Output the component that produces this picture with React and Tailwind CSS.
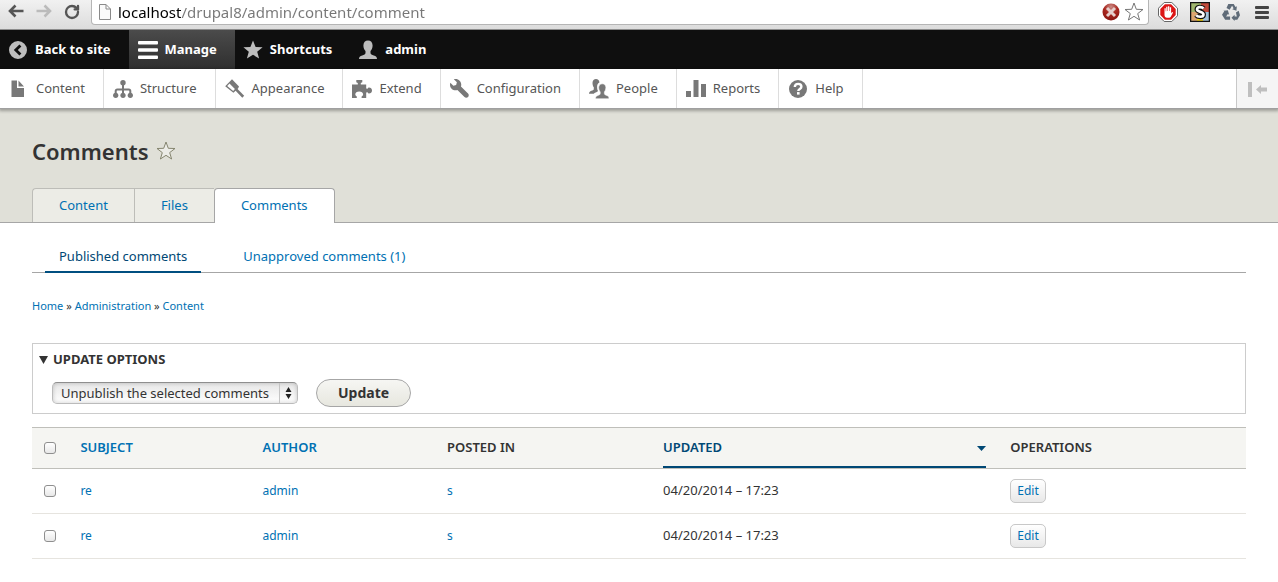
import { RotateCw } from 'lucide-react';

const svgProps = { viewBox: '0 0 20 20', width: 20, height: 20, fill: 'currentColor', 'aria-hidden': true };

const icons = {
  back: (
    <svg {...svgProps}>
      <path fillRule="evenodd" d="M10 1a9 9 0 1 0 0 18 9 9 0 0 0 0-18zM11.4 4.4l2 2L9.8 10l3.6 3.6-2 2L5.8 10z" />
    </svg>
  ),
  manage: (
    <svg {...svgProps}>
      <rect y="1" width="20" height="3.500" rx="1" />
      <rect y="8.250" width="20" height="3.500" rx="1" />
      <rect y="15.500" width="20" height="3.500" rx="1" />
    </svg>
  ),
  star: (
    <svg {...svgProps}>
      <path d="M10 .5l2.600 6.400 7 .4-5.400 4.400 1.900 6.800L10 14.800l-6.100 3.700 1.900-6.800L.4 7.300l7-.4z" />
    </svg>
  ),
  person: (
    <svg {...svgProps}>
      <path d="M10 .5c2.800 0 4.600 1.900 4.600 5 0 2.300-.9 4.300-2.100 5.500v2c0 1.300 1.400 1.800 3.300 2.400 2.200.7 3.200 1.500 3.200 3.600H1c0-2.100 1-2.900 3.200-3.600 1.900-.6 3.300-1.100 3.300-2.400v-2C6.300 9.800 5.400 7.800 5.400 5.500c0-3.100 1.800-5 4.600-5z" />
    </svg>
  ),
  content: (
    <svg {...svgProps}>
      <path d="M2.500 1.500H8v7.500h7v9H2.500zM9.500 1.500l5.500 6H9.500z" />
    </svg>
  ),
  structure: (
    <svg {...svgProps}>
      <circle cx="10" cy="3.800" r="2.700" />
      <path d="M2.700 15v-3a1.500 1.500 0 0 1 1.500-1.500h11.600a1.500 1.500 0 0 1 1.500 1.500v3M10 4v11" fill="none" stroke="currentColor" strokeWidth="2" />
      <circle cx="2.700" cy="16.300" r="2.600" />
      <circle cx="10" cy="16.300" r="2.600" />
      <circle cx="17.300" cy="16.300" r="2.600" />
    </svg>
  ),
  appearance: (
    <svg {...svgProps}>
      <path fillRule="evenodd" d="M7 .3l7 7.200-.8 1.700-4.800 4.600L.2 7.200zM4.500 4.400L2.200 7l6 5 1.700-1.900z" />
      <path d="M11.800 9.200l7.400 7.600-1.900 2-7.400-7.700z" />
    </svg>
  ),
  extend: (
    <svg {...svgProps}>
      <path d="M4.300 1h6v2.200L8.800 4v1.600h5.400v4l1.300.2 1-1.300c2-.2 3.500 1.100 3.500 3s-1.500 3.200-3.500 3l-1-1.300-1.300.2V19H9.600v-1.500c1-.6 1.500-1.300 1.500-2.200 0-1.700-1.600-2.900-3.900-2.900s-3.900 1.200-3.900 2.900c0 .9.500 1.600 1.500 2.200V19H0V5.600h5.800V4l-1.500-.8z" />
    </svg>
  ),
  configuration: (
    <svg {...svgProps} viewBox="0 0 16 16">
      <path d="M14.416 11.586l-5.666-5.665c.15-.449.252-.921.252-1.421 0-2.485-2.016-4.500-4.502-4.500-.505 0-.981.102-1.434.255l2.431 2.431-.588 2.196-2.196.588-2.445-2.445c-.162.464-.268.956-.268 1.475 0 2.486 2.014 4.500 4.500 4.500.500 0 .972-.102 1.421-.251l5.667 5.665c.781.781 2.047.781 2.828 0s.781-2.047 0-2.828z" />
    </svg>
  ),
  people: (
    <svg {...svgProps}>
      <path d="M7 0c2 0 3.400 1.300 3.400 3.400-1.700.9-2.300 2.500-2.300 4.600 0 1.500.2 2.900.9 4-.4.700-1.400 1-2.400 1.500-.8.300-1.400.8-1.800 1.300H0c0-1.700.8-2.500 2.400-3.100 1.500-.5 2.400-.8 2.400-1.800V8.300C3.900 7.300 3.500 5.600 3.500 3.800 3.500 1.500 5 0 7 0z" />
      <path d="M13.300 4.800c2.200 0 3.600 1.500 3.600 3.800 0 1.800-.6 3.300-1.500 4.300v1.700c0 1 1 1.400 2.400 1.900 1.600.6 2.200 1.200 2.200 3.300H6.500c0-2.100.7-2.700 2.300-3.300 1.400-.5 2.400-.9 2.400-1.900v-1.700c-.9-1-1.500-2.500-1.500-4.300 0-2.300 1.400-3.800 3.600-3.800z" stroke="#fff" strokeWidth="0.600" />
    </svg>
  ),
  reports: (
    <svg {...svgProps}>
      <rect x="0" y="12" width="5" height="6" />
      <rect x="7.500" y="1" width="5" height="17" />
      <rect x="15" y="5" width="5" height="13" />
    </svg>
  ),
  help: (
    <svg {...svgProps}>
      <circle cx="10" cy="10" r="9" />
      <path d="M6.800 8c0-2 1.300-3.100 3.300-3.100s3.300 1.100 3.300 2.800c0 2.200-3.100 2.300-3.100 4.300" fill="none" stroke="#fff" strokeWidth="2.400" />
      <rect x="9" y="13.100" width="2.600" height="2.500" fill="#fff" />
    </svg>
  ),
};

const toolbarTabs = [
  { label: 'Back to site', icon: 'back' },
  { label: 'Manage', icon: 'manage', active: true },
  { label: 'Shortcuts', icon: 'star' },
  { label: 'admin', icon: 'person' },
];

const trayItems = [
  { label: 'Content', icon: 'content' },
  { label: 'Structure', icon: 'structure' },
  { label: 'Appearance', icon: 'appearance' },
  { label: 'Extend', icon: 'extend' },
  { label: 'Configuration', icon: 'configuration' },
  { label: 'People', icon: 'people' },
  { label: 'Reports', icon: 'reports' },
  { label: 'Help', icon: 'help' },
];

const comments = [
  { id: 1, subject: 're', author: 'admin', postedIn: 's', updated: '04/20/2014 – 17:23' },
  { id: 2, subject: 're', author: 'admin', postedIn: 's', updated: '04/20/2014 – 17:23' },
];

function StarOutline({ className }) {
  return (
    <svg viewBox="0 0 20 20" width="20" height="20" fill="#fff" fillOpacity="0.4" stroke="currentColor" className={className} aria-hidden="true">
      <path d="M10 1l2.300 6.300 6.700.2-5.300 4.100 1.900 6.400L10 14.300 4.400 18l1.900-6.400L1 7.500l6.700-.2z" />
    </svg>
  );
}

function ArrowIcon({ className }) {
  return (
    <svg viewBox="0 0 16 14" width="16" height="14" fill="none" stroke="currentColor" strokeWidth="2.600" className={className} aria-hidden="true">
      <path d="M7.500 1.500L2 7l5.500 5.500M2 7h13.500" />
    </svg>
  );
}

function BrowserBar() {
  return (
    <div className="flex h-[30px] items-start border-b border-[#8c8c8c] bg-linear-to-b from-[#f1f1f1] to-[#dcdcdc] pl-2">
      <button aria-label="Back" className="mt-1 w-7 text-[#555]"><ArrowIcon /></button>
      <button aria-label="Forward" className="mt-1 w-7 text-[#bbb]"><ArrowIcon className="rotate-180" /></button>
      <button aria-label="Reload" className="mt-1 w-[27px] text-[#555]"><RotateCw className="size-4" strokeWidth={3.5} /></button>
      <div className="flex h-[25px] flex-1 items-center rounded-b border border-t-0 border-[#b5b5b5] bg-white pr-1 pl-[7px]">
        <svg viewBox="0 0 12 16" width="12" height="16" fill="#fafafa" stroke="#8a8a8a" aria-hidden="true">
          <path d="M.5.5h6.500l4.500 4.500v10.500H.5zM7 .5V5h4.500" />
        </svg>
        <input
          aria-label="Address"
          defaultValue="localhost/drupal8/admin/content/comment"
          className="ml-[7px] h-6 min-w-0 flex-1 bg-[linear-gradient(to_right,#000_63px,#777_63px)] bg-clip-text font-['Noto_Sans',sans-serif] text-[15px] text-transparent outline-none"
        />
        <svg viewBox="0 0 18 18" width="18" height="18" aria-hidden="true">
          <defs>
            <radialGradient id="blocked" cx="0.500" cy="0.200" r="0.800">
              <stop offset="0" stopColor="#c98a84" />
              <stop offset="0.500" stopColor="#a8271f" />
              <stop offset="1" stopColor="#8a1510" />
            </radialGradient>
          </defs>
          <circle cx="9" cy="9" r="8.500" fill="url(#blocked)" />
          <path d="M5 5l8 8M13 5l-8 8" stroke="#e6cfcc" strokeWidth="3" />
        </svg>
        <StarOutline className="ml-1 text-[#777]" />
      </div>
      <div className="flex items-center gap-3 pt-[2px] pr-[9px] pl-[9px]">
        <svg viewBox="0 0 20 20" width="20" height="20" aria-hidden="true">
          <path d="M6.200.5h7.600l5.700 5.700v7.600l-5.700 5.700H6.200L.5 13.800V6.200z" fill="#fff" stroke="#666" />
          <path d="M6.900 2.300h6.200l4.600 4.600v6.200l-4.600 4.600H6.900l-4.600-4.600V6.900z" fill="#dc1616" />
          <path d="M6.500 9.800V6.300h1.200v3h.5V4.800h1.300v4.300h.5V4.300h1.300v4.800h.5V5.300h1.300v6l1-1.300 1 .6-2.300 4.200c-.4.600-.9.900-1.500.9H9c-1.500 0-2.500-1.200-2.500-2.800z" fill="#fff" />
        </svg>
        <svg viewBox="0 0 20 20" width="20" height="20" aria-hidden="true">
          <rect x="1" y="1" width="18" height="18" fill="#9fb56c" />
          <path d="M11 1h8v9h-8z" fill="#c24a3a" />
          <path d="M1 10h10v9H1z" fill="#dba66f" />
          <path d="M11 10h8v9h-8z" fill="#a3c3da" />
          <path d="M7 15h6v4H7z" fill="#f3d21b" />
          <rect x="0.500" y="0.500" width="19" height="19" fill="none" stroke="#111" strokeWidth="1.500" />
          <path d="M13.500 6.500C12.500 5 7 4.200 7 7.200c0 3 6.500 2 6.500 5.300 0 3.200-5.800 2.700-7.300.8" fill="none" stroke="#111" strokeWidth="5" />
          <path d="M13.500 6.500C12.500 5 7 4.200 7 7.200c0 3 6.500 2 6.500 5.300 0 3.200-5.800 2.700-7.300.8" fill="none" stroke="#fff" strokeWidth="2.600" />
        </svg>
        <svg viewBox="0 0 20 20" width="18" height="20" fill="#5f6b78" aria-hidden="true">
          <path d="M7 1h6l2 3.500 1.500-.8-.5 5-4.600-1.800 1.500-1L11.200 3 8.500 7.500 5 5.500zM1.500 8.500l5-.5 1.500 5-1.500-.8L4.500 15H9v3.500H3.500L0 13l2.500-3.800zM15.500 10.500l3-1.800L20 13.500 17 18.500h-3V20l-3.500-3.500L14 13v2h2.500z" />
        </svg>
        <button aria-label="Browser menu" className="ml-[3px] text-[#444]">
          <svg viewBox="0 0 14 14" width="14" height="14" fill="currentColor" aria-hidden="true">
            <rect y="1" width="14" height="3" rx="1" />
            <rect y="6" width="14" height="3" rx="1" />
            <rect y="11" width="14" height="3" rx="1" />
          </svg>
        </button>
      </div>
    </div>
  );
}

function Toolbar() {
  return (
    <header>
      <nav className="flex h-[39px] bg-[#0f0f0f] text-[13px] font-bold text-white">
        {toolbarTabs.map((tab) => (
          <a
            key={tab.label}
            href="#"
            className={
              tab.active
                ? 'flex items-center gap-[7px] bg-linear-to-b from-[#4b4b4b] to-[#2f2f2f] pr-[18px] pl-[9px]'
                : 'flex items-center gap-[7px] pr-[18px] pl-2 [&_svg]:text-[#bdbdbd]'
            }
          >
            {icons[tab.icon]}
            {tab.label}
          </a>
        ))}
      </nav>
      <nav className="relative flex h-10 border-b border-[#a0a0a0] bg-white text-[13px] text-[#565656] shadow-[0_1px_3px_1px_rgba(0,0,0,0.3)]">
        {trayItems.map((item) => (
          <a key={item.label} href="#" className="flex items-center gap-[7px] border-r border-[#ddd] pr-[18px] pl-[9px] [&_svg]:text-[#787878]">
            {icons[item.icon]}
            {item.label}
          </a>
        ))}
        <button aria-label="Vertical orientation" className="ml-auto flex w-[42px] items-center justify-center border-l border-[#c8c8c8] bg-[#f5f5f5] text-[#bfbfbf]">
          <svg viewBox="0 0 20 16" width="20" height="16" fill="currentColor" aria-hidden="true">
            <path d="M0 1h4v15H0zM8 8.500L13 4v2.500h6v4h-6V13z" />
          </svg>
        </button>
      </nav>
    </header>
  );
}

function PageHeader() {
  return (
    <div className="border-b border-[#a6a6a6] bg-[#e0e0d8] px-8 pt-[27px]">
      <div className="flex items-center gap-[7px]">
        <h1 className="text-[22px] leading-[30px] font-semibold text-[#333]">Comments</h1>
        <button aria-label="Add to shortcuts"><StarOutline className="text-[#85856f]" /></button>
      </div>
      <nav className="mt-[22px] -mb-px flex text-[13px] leading-[33px] text-[#0071b3]">
        <a href="#" className="mb-px rounded-tl-[4px] border-t border-l border-[#bdbdb8] bg-[#ecece6] px-[26px]">Content</a>
        <a href="#" className="mb-px border-t border-l border-[#bdbdb8] bg-[#ecece6] px-[26px]">Files</a>
        <a href="#" className="rounded-t-[4px] border border-b-0 border-[#a6a6a6] bg-white px-[26px]">Comments</a>
      </nav>
    </div>
  );
}

function UpdateOptions() {
  return (
    <details open className="mt-7 border border-[#ccc] px-[5px] pb-[6px]">
      <summary className="flex h-[31px] cursor-pointer list-none items-center gap-[5px] text-[13px] font-bold uppercase">
        <svg viewBox="0 0 10 8" width="10" height="8" fill="#333" aria-hidden="true"><path d="M1 0h9L5.500 8z" /></svg>
        Update options
      </summary>
      <div className="mt-1 flex items-center gap-[18px] pl-[14px]">
        <div className="relative">
          <select
            aria-label="Operation"
            className="block h-[22px] w-[246px] appearance-none rounded-[5px] border border-[#bbb] border-t-[#8e8e8e] bg-linear-to-b from-[#e6e6e6] to-white pl-2 text-[13px] leading-5 shadow-[inset_0_0_4px_rgba(0,0,0,0.2)]"
          >
            <option>Unpublish the selected comments</option>
            <option>Delete the selected comments</option>
          </select>
          <span className="pointer-events-none absolute inset-y-px right-px flex w-[18px] items-center justify-center border-l border-[#c4c4c4]">
            <svg viewBox="0 0 7 12" width="7" height="12" fill="#222" aria-hidden="true"><path d="M3.500 0L6.500 5h-6zM3.500 12L.5 7h6z" /></svg>
          </span>
        </div>
        <button className="h-7 rounded-full border border-[#a6a6a6] bg-linear-to-b from-[#f6f6f3] to-[#e7e7df] px-[21px] text-sm font-bold text-[#333]">Update</button>
      </div>
    </details>
  );
}

function Checkbox({ label }) {
  return (
    <input
      type="checkbox"
      aria-label={label}
      className="block size-3 appearance-none rounded-[3px] border border-[#8f8f8f] bg-linear-to-b from-white to-[#e8e8e8] checked:bg-[#0071b3]"
    />
  );
}

function CommentsTable() {
  return (
    <table className="mt-[13px] w-full table-fixed text-left text-xs">
      <thead className="border-y border-[#bfbfba] bg-[#f5f5f2] text-[13px] uppercase">
        <tr className="h-[41px] [&>th]:px-3 [&>th]:py-0 [&>th]:font-semibold">
          <th className="w-[3%]"><Checkbox label="Select all comments" /></th>
          <th className="w-[15%]"><a href="#" className="text-[#0071b3]">Subject</a></th>
          <th className="w-[15.2%]"><a href="#" className="text-[#0071b3]">Author</a></th>
          <th className="w-[17.8%]">Posted in</th>
          <th className="w-[28.6%]">
            <a href="#" className="flex h-10 items-center justify-between border-b-2 border-[#004875] pt-[2px] text-[#004875]">
              Updated
              <svg viewBox="0 0 9 5" width="9" height="5" fill="currentColor" aria-hidden="true"><path d="M0 0h9L4.500 5z" /></svg>
            </a>
          </th>
          <th>Operations</th>
        </tr>
      </thead>
      <tbody>
        {comments.map((comment) => (
          <tr key={comment.id} className="h-[45px] border-b border-[#e6e4df] [&_a]:text-[#0071b3] [&>td]:px-3">
            <td><Checkbox label={`Select comment ${comment.id}`} /></td>
            <td><a href="#">{comment.subject}</a></td>
            <td><a href="#">{comment.author}</a></td>
            <td><a href="#">{comment.postedIn}</a></td>
            <td className="text-[13px]">{comment.updated}</td>
            <td>
              <a href="#" className="inline-flex h-6 items-center rounded-[5px] border border-[#c8c8c8] bg-linear-to-b from-white to-[#e8e8e8] px-[6px]">Edit</a>
            </td>
          </tr>
        ))}
      </tbody>
    </table>
  );
}

export default function App() {
  return (
    <div className="min-h-screen bg-white font-['Noto_Sans',sans-serif] text-[#333]">
      <BrowserBar />
      <Toolbar />
      <PageHeader />
      <main className="px-8 pb-5">
        <nav className="mt-[18px] flex border-b border-[#a6a6a6] pl-[13px] text-[13px] leading-[30px]">
          <a href="#" className="-mb-px border-b-2 border-[#004f80] px-[14px] text-[#004875]">Published comments</a>
          <a href="#" className="ml-7 px-[14px] text-[#0071b3]">Unapproved comments (1)</a>
        </nav>
        <nav aria-label="Breadcrumb" className="mt-6 text-[11px] leading-[18px] [&_a]:text-[#0071b3]">
          <a href="#">Home</a> » <a href="#">Administration</a> » <a href="#">Content</a>
        </nav>
        <UpdateOptions />
        <CommentsTable />
      </main>
    </div>
  );
}
